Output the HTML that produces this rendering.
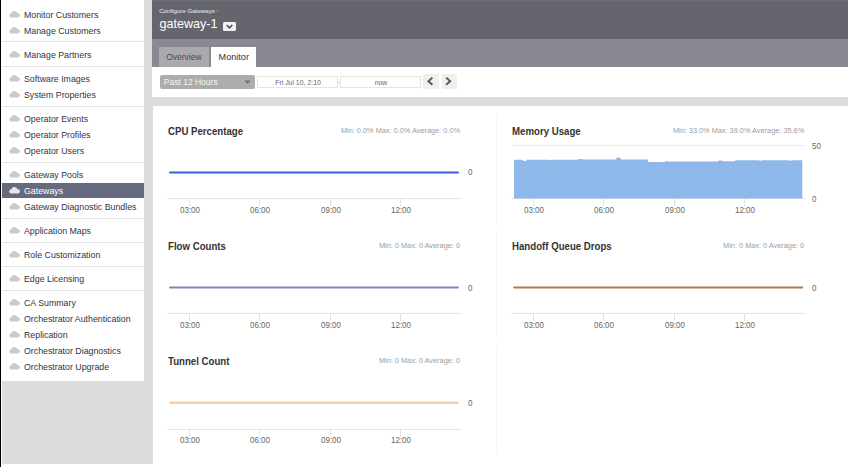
<!DOCTYPE html><html><head><meta charset="utf-8"><style>
html,body{margin:0;padding:0;}
body{width:849px;height:467px;position:relative;overflow:hidden;background:#fff;font-family:"Liberation Sans",sans-serif;}
.r{position:absolute;}
.t{position:absolute;white-space:nowrap;}
</style></head><body>
<div class="r" style="left:0px;top:0px;width:1px;height:467px;background:#000;"></div>
<div class="r" style="left:144px;top:0px;width:9px;height:464px;background:#dddddd;"></div>
<div class="r" style="left:2px;top:381px;width:142px;height:83px;background:#dddddd;"></div>
<div class="r" style="left:2px;top:41px;width:142px;height:1px;background:#e3e3e3;"></div>
<div class="r" style="left:2px;top:66px;width:142px;height:1px;background:#e3e3e3;"></div>
<div class="r" style="left:2px;top:106px;width:142px;height:1px;background:#e3e3e3;"></div>
<div class="r" style="left:2px;top:162px;width:142px;height:1px;background:#e3e3e3;"></div>
<div class="r" style="left:2px;top:218px;width:142px;height:1px;background:#e3e3e3;"></div>
<div class="r" style="left:2px;top:242px;width:142px;height:1px;background:#e3e3e3;"></div>
<div class="r" style="left:2px;top:266px;width:142px;height:1px;background:#e3e3e3;"></div>
<div class="r" style="left:2px;top:290px;width:142px;height:1px;background:#e3e3e3;"></div>
<div class="r" style="left:2px;top:183px;width:142px;height:15px;background:#656a7f;"></div>
<svg class="r" style="left:8.5px;top:10.8px" width="12" height="7" viewBox="0 0 12 7"><g fill="#cbcbcb"><circle cx="5.3" cy="3" r="2.9"/><circle cx="2.3" cy="4.4" r="2.1"/><circle cx="8.7" cy="4.3" r="2.2"/><rect x="2.3" y="3.5" width="6.4" height="3"/></g></svg>
<div class="t" style="left:24.00px;top:10.85px;font-size:8.8px;line-height:8.8px;color:#33333f;">Monitor Customers</div>
<svg class="r" style="left:8.5px;top:26.8px" width="12" height="7" viewBox="0 0 12 7"><g fill="#cbcbcb"><circle cx="5.3" cy="3" r="2.9"/><circle cx="2.3" cy="4.4" r="2.1"/><circle cx="8.7" cy="4.3" r="2.2"/><rect x="2.3" y="3.5" width="6.4" height="3"/></g></svg>
<div class="t" style="left:24.00px;top:26.85px;font-size:8.8px;line-height:8.8px;color:#33333f;">Manage Customers</div>
<svg class="r" style="left:8.5px;top:50.8px" width="12" height="7" viewBox="0 0 12 7"><g fill="#cbcbcb"><circle cx="5.3" cy="3" r="2.9"/><circle cx="2.3" cy="4.4" r="2.1"/><circle cx="8.7" cy="4.3" r="2.2"/><rect x="2.3" y="3.5" width="6.4" height="3"/></g></svg>
<div class="t" style="left:24.00px;top:50.85px;font-size:8.8px;line-height:8.8px;color:#33333f;">Manage Partners</div>
<svg class="r" style="left:8.5px;top:74.8px" width="12" height="7" viewBox="0 0 12 7"><g fill="#cbcbcb"><circle cx="5.3" cy="3" r="2.9"/><circle cx="2.3" cy="4.4" r="2.1"/><circle cx="8.7" cy="4.3" r="2.2"/><rect x="2.3" y="3.5" width="6.4" height="3"/></g></svg>
<div class="t" style="left:24.00px;top:74.85px;font-size:8.8px;line-height:8.8px;color:#33333f;">Software Images</div>
<svg class="r" style="left:8.5px;top:90.8px" width="12" height="7" viewBox="0 0 12 7"><g fill="#cbcbcb"><circle cx="5.3" cy="3" r="2.9"/><circle cx="2.3" cy="4.4" r="2.1"/><circle cx="8.7" cy="4.3" r="2.2"/><rect x="2.3" y="3.5" width="6.4" height="3"/></g></svg>
<div class="t" style="left:24.00px;top:90.85px;font-size:8.8px;line-height:8.8px;color:#33333f;">System Properties</div>
<svg class="r" style="left:8.5px;top:114.8px" width="12" height="7" viewBox="0 0 12 7"><g fill="#cbcbcb"><circle cx="5.3" cy="3" r="2.9"/><circle cx="2.3" cy="4.4" r="2.1"/><circle cx="8.7" cy="4.3" r="2.2"/><rect x="2.3" y="3.5" width="6.4" height="3"/></g></svg>
<div class="t" style="left:24.00px;top:114.85px;font-size:8.8px;line-height:8.8px;color:#33333f;">Operator Events</div>
<svg class="r" style="left:8.5px;top:130.8px" width="12" height="7" viewBox="0 0 12 7"><g fill="#cbcbcb"><circle cx="5.3" cy="3" r="2.9"/><circle cx="2.3" cy="4.4" r="2.1"/><circle cx="8.7" cy="4.3" r="2.2"/><rect x="2.3" y="3.5" width="6.4" height="3"/></g></svg>
<div class="t" style="left:24.00px;top:130.85px;font-size:8.8px;line-height:8.8px;color:#33333f;">Operator Profiles</div>
<svg class="r" style="left:8.5px;top:146.8px" width="12" height="7" viewBox="0 0 12 7"><g fill="#cbcbcb"><circle cx="5.3" cy="3" r="2.9"/><circle cx="2.3" cy="4.4" r="2.1"/><circle cx="8.7" cy="4.3" r="2.2"/><rect x="2.3" y="3.5" width="6.4" height="3"/></g></svg>
<div class="t" style="left:24.00px;top:146.85px;font-size:8.8px;line-height:8.8px;color:#33333f;">Operator Users</div>
<svg class="r" style="left:8.5px;top:170.8px" width="12" height="7" viewBox="0 0 12 7"><g fill="#cbcbcb"><circle cx="5.3" cy="3" r="2.9"/><circle cx="2.3" cy="4.4" r="2.1"/><circle cx="8.7" cy="4.3" r="2.2"/><rect x="2.3" y="3.5" width="6.4" height="3"/></g></svg>
<div class="t" style="left:24.00px;top:170.85px;font-size:8.8px;line-height:8.8px;color:#33333f;">Gateway Pools</div>
<svg class="r" style="left:8.5px;top:186.8px" width="12" height="7" viewBox="0 0 12 7"><g fill="#e6e6e6"><circle cx="5.3" cy="3" r="2.9"/><circle cx="2.3" cy="4.4" r="2.1"/><circle cx="8.7" cy="4.3" r="2.2"/><rect x="2.3" y="3.5" width="6.4" height="3"/></g></svg>
<div class="t" style="left:24.00px;top:186.85px;font-size:8.8px;line-height:8.8px;color:#fff;">Gateways</div>
<svg class="r" style="left:8.5px;top:202.8px" width="12" height="7" viewBox="0 0 12 7"><g fill="#cbcbcb"><circle cx="5.3" cy="3" r="2.9"/><circle cx="2.3" cy="4.4" r="2.1"/><circle cx="8.7" cy="4.3" r="2.2"/><rect x="2.3" y="3.5" width="6.4" height="3"/></g></svg>
<div class="t" style="left:24.00px;top:202.85px;font-size:8.8px;line-height:8.8px;color:#33333f;">Gateway Diagnostic Bundles</div>
<svg class="r" style="left:8.5px;top:226.8px" width="12" height="7" viewBox="0 0 12 7"><g fill="#cbcbcb"><circle cx="5.3" cy="3" r="2.9"/><circle cx="2.3" cy="4.4" r="2.1"/><circle cx="8.7" cy="4.3" r="2.2"/><rect x="2.3" y="3.5" width="6.4" height="3"/></g></svg>
<div class="t" style="left:24.00px;top:226.85px;font-size:8.8px;line-height:8.8px;color:#33333f;">Application Maps</div>
<svg class="r" style="left:8.5px;top:250.8px" width="12" height="7" viewBox="0 0 12 7"><g fill="#cbcbcb"><circle cx="5.3" cy="3" r="2.9"/><circle cx="2.3" cy="4.4" r="2.1"/><circle cx="8.7" cy="4.3" r="2.2"/><rect x="2.3" y="3.5" width="6.4" height="3"/></g></svg>
<div class="t" style="left:24.00px;top:250.85px;font-size:8.8px;line-height:8.8px;color:#33333f;">Role Customization</div>
<svg class="r" style="left:8.5px;top:274.8px" width="12" height="7" viewBox="0 0 12 7"><g fill="#cbcbcb"><circle cx="5.3" cy="3" r="2.9"/><circle cx="2.3" cy="4.4" r="2.1"/><circle cx="8.7" cy="4.3" r="2.2"/><rect x="2.3" y="3.5" width="6.4" height="3"/></g></svg>
<div class="t" style="left:24.00px;top:274.85px;font-size:8.8px;line-height:8.8px;color:#33333f;">Edge Licensing</div>
<svg class="r" style="left:8.5px;top:298.8px" width="12" height="7" viewBox="0 0 12 7"><g fill="#cbcbcb"><circle cx="5.3" cy="3" r="2.9"/><circle cx="2.3" cy="4.4" r="2.1"/><circle cx="8.7" cy="4.3" r="2.2"/><rect x="2.3" y="3.5" width="6.4" height="3"/></g></svg>
<div class="t" style="left:24.00px;top:298.85px;font-size:8.8px;line-height:8.8px;color:#33333f;">CA Summary</div>
<svg class="r" style="left:8.5px;top:314.8px" width="12" height="7" viewBox="0 0 12 7"><g fill="#cbcbcb"><circle cx="5.3" cy="3" r="2.9"/><circle cx="2.3" cy="4.4" r="2.1"/><circle cx="8.7" cy="4.3" r="2.2"/><rect x="2.3" y="3.5" width="6.4" height="3"/></g></svg>
<div class="t" style="left:24.00px;top:314.85px;font-size:8.8px;line-height:8.8px;color:#33333f;">Orchestrator Authentication</div>
<svg class="r" style="left:8.5px;top:330.8px" width="12" height="7" viewBox="0 0 12 7"><g fill="#cbcbcb"><circle cx="5.3" cy="3" r="2.9"/><circle cx="2.3" cy="4.4" r="2.1"/><circle cx="8.7" cy="4.3" r="2.2"/><rect x="2.3" y="3.5" width="6.4" height="3"/></g></svg>
<div class="t" style="left:24.00px;top:330.85px;font-size:8.8px;line-height:8.8px;color:#33333f;">Replication</div>
<svg class="r" style="left:8.5px;top:346.8px" width="12" height="7" viewBox="0 0 12 7"><g fill="#cbcbcb"><circle cx="5.3" cy="3" r="2.9"/><circle cx="2.3" cy="4.4" r="2.1"/><circle cx="8.7" cy="4.3" r="2.2"/><rect x="2.3" y="3.5" width="6.4" height="3"/></g></svg>
<div class="t" style="left:24.00px;top:346.85px;font-size:8.8px;line-height:8.8px;color:#33333f;">Orchestrator Diagnostics</div>
<svg class="r" style="left:8.5px;top:362.8px" width="12" height="7" viewBox="0 0 12 7"><g fill="#cbcbcb"><circle cx="5.3" cy="3" r="2.9"/><circle cx="2.3" cy="4.4" r="2.1"/><circle cx="8.7" cy="4.3" r="2.2"/><rect x="2.3" y="3.5" width="6.4" height="3"/></g></svg>
<div class="t" style="left:24.00px;top:362.85px;font-size:8.8px;line-height:8.8px;color:#33333f;">Orchestrator Upgrade</div>
<div class="r" style="left:152px;top:0px;width:696px;height:39.4px;background:#65656e;"></div>
<div class="r" style="left:152px;top:0px;width:696px;height:1px;background:#6e6e77;"></div>
<div class="t" style="left:159.20px;top:8.39px;font-size:6.15px;line-height:6.15px;color:#ececf2;">Configure Gateways</div>
<div class="t" style="left:215.80px;top:9.37px;font-size:5px;line-height:5px;color:#a8a8b0;">&gt;</div>
<div class="t" style="left:159.40px;top:18.13px;font-size:12.6px;line-height:12.6px;color:#fff;">gateway-1</div>
<div class="r" style="left:222.5px;top:22px;width:13.5px;height:9px;background:#f2f2f2;border-radius:1.5px;"></div>
<svg class="r" style="left:222px;top:22px" width="14" height="9" viewBox="0 0 14 9"><path d="M4.7 2.9 L7.5 5.8 L10.3 2.9" stroke="#4a4a55" stroke-width="1.5" fill="none"/></svg>
<div class="r" style="left:152px;top:39.4px;width:696px;height:27.6px;background:#898992;"></div>
<div class="r" style="left:159px;top:47px;width:50px;height:20px;background:#aaa9af;"></div>
<div class="t" style="left:166.20px;top:53.40px;font-size:8.5px;line-height:8.5px;color:#4a4a55;">Overview</div>
<div class="r" style="left:211px;top:47px;width:45px;height:20px;background:#fff;"></div>
<div class="t" style="left:218.60px;top:52.90px;font-size:9.1px;line-height:9.1px;color:#33333f;">Monitor</div>
<div class="r" style="left:152px;top:67px;width:696px;height:30px;background:#fff;"></div>
<div class="r" style="left:160px;top:74.5px;width:95px;height:14px;background:#acacac;border-radius:2px;"></div>
<div class="t" style="left:163.80px;top:77.60px;font-size:8.5px;line-height:8.5px;color:#f4f4f4;">Past 12 Hours</div>
<svg class="r" style="left:243px;top:79.5px" width="9" height="5" viewBox="0 0 9 5"><path d="M1.3 0.5 L7.7 0.5 L4.5 4Z" fill="#707070"/></svg>
<div class="r" style="left:257px;top:76px;width:79px;height:9.8px;background:#fff;border:1px solid #e5e5e5;"></div>
<div class="t" style="left:197.50px;width:200px;text-align:center;top:78.51px;font-size:7.2px;line-height:7.2px;color:#666;font-weight:;transform:scaleX(0.96);transform-origin:center top;">Fri Jul 10, 2:10</div>
<div class="r" style="left:338px;top:81.5px;width:2px;height:1px;background:#ccc;"></div>
<div class="r" style="left:340px;top:76px;width:79px;height:9.8px;background:#fff;border:1px solid #e5e5e5;"></div>
<div class="t" style="left:280.50px;width:200px;text-align:center;top:78.51px;font-size:7.2px;line-height:7.2px;color:#666;font-weight:;transform:scaleX(0.93);transform-origin:center top;">now</div>
<div class="r" style="left:423px;top:74px;width:15.5px;height:14.6px;background:#efefef;border-radius:1px;"></div>
<div class="r" style="left:441.5px;top:74px;width:15px;height:14.6px;background:#efefef;border-radius:1px;"></div>
<svg class="r" style="left:423px;top:74px" width="16" height="15" viewBox="0 0 16 15"><path d="M9.4 3.6 L5.4 7.2 L9.4 10.8" stroke="#555" stroke-width="1.9" fill="none"/></svg>
<svg class="r" style="left:441px;top:74px" width="16" height="15" viewBox="0 0 16 15"><path d="M5.2 3.6 L9.2 7.2 L5.2 10.8" stroke="#555" stroke-width="1.9" fill="none"/></svg>
<div class="r" style="left:152px;top:97px;width:696px;height:9px;background:#dddddd;"></div>
<div class="r" style="left:153px;top:106px;width:695px;height:358px;background:#fff;"></div>
<div class="r" style="left:496px;top:116px;width:1px;height:108px;background:#f5f5f5;"></div>
<div class="r" style="left:496px;top:231px;width:1px;height:108px;background:#f5f5f5;"></div>
<div class="r" style="left:496px;top:346px;width:1px;height:108px;background:#f5f5f5;"></div>
<div class="t" style="left:167.50px;top:126.84px;font-size:10px;line-height:10px;color:#333;font-weight:bold;transform:scaleX(0.965);transform-origin:left top;">CPU Percentage</div>
<div class="t" style="right:389.00px;top:127.08px;font-size:7.35px;line-height:7.35px;color:#9c9c9c;text-align:right;">Min: 0.0% Max: 0.0% Average: 0.0%</div>
<div class="r" style="left:167px;top:198.3px;width:294px;height:1px;background:#e3e3e3;"></div>
<div class="r" style="left:189px;top:199px;width:1px;height:7px;background:#dbe2ee;"></div>
<div class="t" style="left:89.50px;width:200px;text-align:center;top:205.72px;font-size:8.6px;line-height:8.6px;color:#666;transform:scaleX(0.93);transform-origin:center top;">03:00</div>
<div class="r" style="left:259px;top:199px;width:1px;height:7px;background:#dbe2ee;"></div>
<div class="t" style="left:160.00px;width:200px;text-align:center;top:205.72px;font-size:8.6px;line-height:8.6px;color:#666;transform:scaleX(0.93);transform-origin:center top;">06:00</div>
<div class="r" style="left:330px;top:199px;width:1px;height:7px;background:#dbe2ee;"></div>
<div class="t" style="left:230.50px;width:200px;text-align:center;top:205.72px;font-size:8.6px;line-height:8.6px;color:#666;transform:scaleX(0.93);transform-origin:center top;">09:00</div>
<div class="r" style="left:400px;top:199px;width:1px;height:7px;background:#dbe2ee;"></div>
<div class="t" style="left:301.00px;width:200px;text-align:center;top:205.72px;font-size:8.6px;line-height:8.6px;color:#666;transform:scaleX(0.93);transform-origin:center top;">12:00</div>
<svg class="r" style="left:0;top:0" width="849" height="467"><line x1="170.00" y1="172.50" x2="458.00" y2="172.50" stroke="#3a5fdc" stroke-width="2" stroke-linecap="round"/></svg>
<div class="t" style="left:468.00px;top:168.42px;font-size:8.6px;line-height:8.6px;color:#666;transform:scaleX(0.93);transform-origin:left top;">0</div>
<div class="t" style="left:511.70px;top:126.84px;font-size:10px;line-height:10px;color:#333;font-weight:bold;transform:scaleX(0.965);transform-origin:left top;">Memory Usage</div>
<div class="t" style="right:44.80px;top:127.08px;font-size:7.35px;line-height:7.35px;color:#9c9c9c;text-align:right;">Min: 33.0% Max: 39.0% Average: 35.6%</div>
<div class="r" style="left:511.2px;top:198.3px;width:294px;height:1px;background:#e3e3e3;"></div>
<div class="r" style="left:533px;top:199px;width:1px;height:7px;background:#dbe2ee;"></div>
<div class="t" style="left:433.70px;width:200px;text-align:center;top:205.72px;font-size:8.6px;line-height:8.6px;color:#666;transform:scaleX(0.93);transform-origin:center top;">03:00</div>
<div class="r" style="left:603px;top:199px;width:1px;height:7px;background:#dbe2ee;"></div>
<div class="t" style="left:504.20px;width:200px;text-align:center;top:205.72px;font-size:8.6px;line-height:8.6px;color:#666;transform:scaleX(0.93);transform-origin:center top;">06:00</div>
<div class="r" style="left:674px;top:199px;width:1px;height:7px;background:#dbe2ee;"></div>
<div class="t" style="left:574.70px;width:200px;text-align:center;top:205.72px;font-size:8.6px;line-height:8.6px;color:#666;transform:scaleX(0.93);transform-origin:center top;">09:00</div>
<div class="r" style="left:744px;top:199px;width:1px;height:7px;background:#dbe2ee;"></div>
<div class="t" style="left:645.20px;width:200px;text-align:center;top:205.72px;font-size:8.6px;line-height:8.6px;color:#666;transform:scaleX(0.93);transform-origin:center top;">12:00</div>
<div class="t" style="left:167.50px;top:241.94px;font-size:10px;line-height:10px;color:#333;font-weight:bold;transform:scaleX(0.965);transform-origin:left top;">Flow Counts</div>
<div class="t" style="right:389.00px;top:242.18px;font-size:7.35px;line-height:7.35px;color:#9c9c9c;text-align:right;">Min: 0 Max: 0 Average: 0</div>
<div class="r" style="left:167px;top:313.4px;width:294px;height:1px;background:#e3e3e3;"></div>
<div class="r" style="left:189px;top:314.1px;width:1px;height:7px;background:#dbe2ee;"></div>
<div class="t" style="left:89.50px;width:200px;text-align:center;top:320.82px;font-size:8.6px;line-height:8.6px;color:#666;transform:scaleX(0.93);transform-origin:center top;">03:00</div>
<div class="r" style="left:259px;top:314.1px;width:1px;height:7px;background:#dbe2ee;"></div>
<div class="t" style="left:160.00px;width:200px;text-align:center;top:320.82px;font-size:8.6px;line-height:8.6px;color:#666;transform:scaleX(0.93);transform-origin:center top;">06:00</div>
<div class="r" style="left:330px;top:314.1px;width:1px;height:7px;background:#dbe2ee;"></div>
<div class="t" style="left:230.50px;width:200px;text-align:center;top:320.82px;font-size:8.6px;line-height:8.6px;color:#666;transform:scaleX(0.93);transform-origin:center top;">09:00</div>
<div class="r" style="left:400px;top:314.1px;width:1px;height:7px;background:#dbe2ee;"></div>
<div class="t" style="left:301.00px;width:200px;text-align:center;top:320.82px;font-size:8.6px;line-height:8.6px;color:#666;transform:scaleX(0.93);transform-origin:center top;">12:00</div>
<svg class="r" style="left:0;top:0" width="849" height="467"><line x1="170.00" y1="287.60" x2="458.00" y2="287.60" stroke="#9a78c8" stroke-width="2" stroke-linecap="round"/></svg>
<div class="t" style="left:468.00px;top:283.52px;font-size:8.6px;line-height:8.6px;color:#666;transform:scaleX(0.93);transform-origin:left top;">0</div>
<div class="t" style="left:511.70px;top:241.94px;font-size:10px;line-height:10px;color:#333;font-weight:bold;transform:scaleX(0.965);transform-origin:left top;">Handoff Queue Drops</div>
<div class="t" style="right:44.80px;top:242.18px;font-size:7.35px;line-height:7.35px;color:#9c9c9c;text-align:right;">Min: 0 Max: 0 Average: 0</div>
<div class="r" style="left:511.2px;top:313.4px;width:294px;height:1px;background:#e3e3e3;"></div>
<div class="r" style="left:533px;top:314.1px;width:1px;height:7px;background:#dbe2ee;"></div>
<div class="t" style="left:433.70px;width:200px;text-align:center;top:320.82px;font-size:8.6px;line-height:8.6px;color:#666;transform:scaleX(0.93);transform-origin:center top;">03:00</div>
<div class="r" style="left:603px;top:314.1px;width:1px;height:7px;background:#dbe2ee;"></div>
<div class="t" style="left:504.20px;width:200px;text-align:center;top:320.82px;font-size:8.6px;line-height:8.6px;color:#666;transform:scaleX(0.93);transform-origin:center top;">06:00</div>
<div class="r" style="left:674px;top:314.1px;width:1px;height:7px;background:#dbe2ee;"></div>
<div class="t" style="left:574.70px;width:200px;text-align:center;top:320.82px;font-size:8.6px;line-height:8.6px;color:#666;transform:scaleX(0.93);transform-origin:center top;">09:00</div>
<div class="r" style="left:744px;top:314.1px;width:1px;height:7px;background:#dbe2ee;"></div>
<div class="t" style="left:645.20px;width:200px;text-align:center;top:320.82px;font-size:8.6px;line-height:8.6px;color:#666;transform:scaleX(0.93);transform-origin:center top;">12:00</div>
<svg class="r" style="left:0;top:0" width="849" height="467"><line x1="514.20" y1="287.60" x2="802.20" y2="287.60" stroke="#b87848" stroke-width="2" stroke-linecap="round"/></svg>
<div class="t" style="left:812.20px;top:283.52px;font-size:8.6px;line-height:8.6px;color:#666;transform:scaleX(0.93);transform-origin:left top;">0</div>
<div class="t" style="left:167.50px;top:357.04px;font-size:10px;line-height:10px;color:#333;font-weight:bold;transform:scaleX(0.965);transform-origin:left top;">Tunnel Count</div>
<div class="t" style="right:389.00px;top:357.28px;font-size:7.35px;line-height:7.35px;color:#9c9c9c;text-align:right;">Min: 0 Max: 0 Average: 0</div>
<div class="r" style="left:167px;top:428.5px;width:294px;height:1px;background:#e3e3e3;"></div>
<div class="r" style="left:189px;top:429.2px;width:1px;height:7px;background:#dbe2ee;"></div>
<div class="t" style="left:89.50px;width:200px;text-align:center;top:435.92px;font-size:8.6px;line-height:8.6px;color:#666;transform:scaleX(0.93);transform-origin:center top;">03:00</div>
<div class="r" style="left:259px;top:429.2px;width:1px;height:7px;background:#dbe2ee;"></div>
<div class="t" style="left:160.00px;width:200px;text-align:center;top:435.92px;font-size:8.6px;line-height:8.6px;color:#666;transform:scaleX(0.93);transform-origin:center top;">06:00</div>
<div class="r" style="left:330px;top:429.2px;width:1px;height:7px;background:#dbe2ee;"></div>
<div class="t" style="left:230.50px;width:200px;text-align:center;top:435.92px;font-size:8.6px;line-height:8.6px;color:#666;transform:scaleX(0.93);transform-origin:center top;">09:00</div>
<div class="r" style="left:400px;top:429.2px;width:1px;height:7px;background:#dbe2ee;"></div>
<div class="t" style="left:301.00px;width:200px;text-align:center;top:435.92px;font-size:8.6px;line-height:8.6px;color:#666;transform:scaleX(0.93);transform-origin:center top;">12:00</div>
<svg class="r" style="left:0;top:0" width="849" height="467"><line x1="170.00" y1="402.70" x2="458.00" y2="402.70" stroke="#f4c8a0" stroke-width="2" stroke-linecap="round"/></svg>
<div class="t" style="left:468.00px;top:398.62px;font-size:8.6px;line-height:8.6px;color:#666;transform:scaleX(0.93);transform-origin:left top;">0</div>
<div class="r" style="left:512px;top:145px;width:293px;height:1px;background:#ececec;"></div>
<div class="t" style="left:811.70px;top:142.12px;font-size:8.6px;line-height:8.6px;color:#666;transform:scaleX(0.93);transform-origin:left top;">50</div>
<div class="t" style="left:811.70px;top:195.12px;font-size:8.6px;line-height:8.6px;color:#666;transform:scaleX(0.93);transform-origin:left top;">0</div>
<svg class="r" style="left:0;top:0" width="849" height="467"><path d="M514 198.5 L514 159.8 L522 159.8 L523 160.8 L526 161 L527 159.8 L550 159.8 L551 160.6 L552 159.8 L578 159.8 L579 159.1 L582 159.1 L583 159.6 L616 159.6 L617 157.6 L620 157.6 L621 159.5 L647.5 159.5 L648.5 162.1 L665 162.1 L665.5 161.2 L668 161.2 L668.5 161.6 L718 161.6 L718.5 160.4 L722 160.4 L722.5 161.3 L735 161.3 L735.5 160.3 L759 160.3 L760 160.9 L762 160.3 L789 160.3 L790 160.9 L792 160.3 L802.3 160.3 L802.3 198.5 Z" fill="#8fb8ea"/></svg>
</body></html>
